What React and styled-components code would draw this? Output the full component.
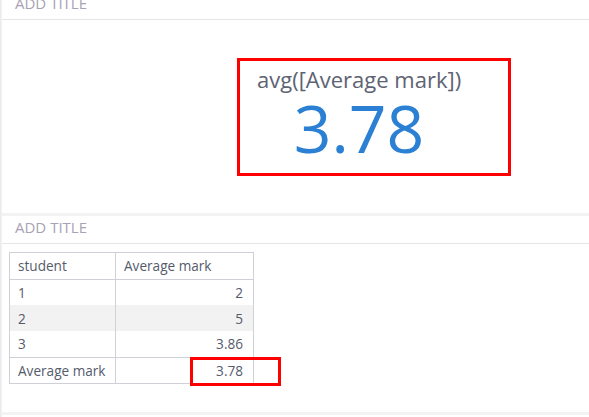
import React from "react";
import styled, { createGlobalStyle } from "styled-components";

const GlobalStyle = createGlobalStyle`
  html, body {
    margin: 0;
    padding: 0;
    background: #ffffff;
    font-family: "Open Sans", "Liberation Sans", sans-serif;
    overflow: hidden;
  }
`;

const Page = styled.div`
  width: 589px;
  height: 425px;
  overflow: hidden;
  margin-top: -8px;
  padding-left: 2px;
  box-sizing: border-box;
  background: linear-gradient(to right, #e9e9e9, #f3f3f3 2px);
  display: flex;
  flex-direction: column;
  gap: 3px;
`;

const Panel = styled.section`
  background: #ffffff;
  display: flex;
  flex-direction: column;
`;

const PanelHeader = styled.div`
  height: 28px;
  box-sizing: border-box;
  padding: 0 0 5px 13px;
  border-bottom: 1px solid #e6e6e6;
  display: flex;
  align-items: center;
`;

const Title = styled.span`
  font-size: 15px;
  color: #a9a2b4;
`;

const KpiBody = styled.div`
  height: 193px;
  box-sizing: border-box;
  padding: 0 0 0 235px;
  display: flex;
  align-items: center;
`;

const Highlight = styled.div`
  width: 274px;
  height: 118px;
  box-sizing: border-box;
  border: 3px solid #ff0000;
  padding-left: 17px;
  display: flex;
`;

const Kpi = styled.div`
  display: flex;
  flex-direction: column;
  align-items: center;
`;

const KpiLabel = styled.div`
  font-size: 22px;
  line-height: 28px;
  color: #5d6373;
  margin-top: 4px;
`;

const KpiValue = styled.div`
  font-size: 66px;
  line-height: 62px;
  color: #2b80d4;
  margin-top: 3px;
`;

const TableBody = styled.div`
  height: 160px;
  padding: 8px 0 0 7px;
  position: relative;
`;

const TableFrame = styled.div`
  display: inline-block;
  border-top: 1px solid #cfd0d8;
  border-bottom: 1px solid #cfd0d8;
`;

const Table = styled.table`
  border-collapse: collapse;
  font-size: 13.6px;
  color: #555b6b;
`;

const Row = styled.tr`
  height: 26px;
  background: ${(p) => (p.$striped ? "#f2f2f2" : "#ffffff")};
  border-top: ${(p) => (p.$ruled ? "1px solid #cfd0d8" : "none")};
`;

const Cell = styled.td`
  box-sizing: border-box;
  padding: 0 ${(p) => (p.$num ? "10px" : "8px")} 0 8px;
  text-align: ${(p) => (p.$num ? "right" : "left")};
  border-left: 1px solid #cfd0d8;
  border-right: 1px solid #cfd0d8;
  width: ${(p) => p.$w || "auto"};
  white-space: nowrap;
`;

const CellMark = styled.div`
  position: absolute;
  left: 188px;
  top: 113px;
  width: 91px;
  height: 29px;
  box-sizing: border-box;
  border: 3px solid #ff0000;
`;

const rows = [
  { student: "1", mark: "2" },
  { student: "2", mark: "5" },
  { student: "3", mark: "3.86" },
];

export default function App() {
  return (
    <>
      <GlobalStyle />
      <Page>
        <Panel>
          <PanelHeader>
            <Title>ADD TITLE</Title>
          </PanelHeader>
          <KpiBody>
            <Highlight>
              <Kpi>
                <KpiLabel>avg([Average mark])</KpiLabel>
                <KpiValue>3.78</KpiValue>
              </Kpi>
            </Highlight>
          </KpiBody>
        </Panel>
        <Panel>
          <PanelHeader>
            <Title>ADD TITLE</Title>
          </PanelHeader>
          <TableBody>
            <TableFrame>
              <Table>
                <tbody>
                  <Row>
                    <Cell $w="106px">student</Cell>
                    <Cell $w="138px">Average mark</Cell>
                  </Row>
                  {rows.map((r, i) => (
                    <Row key={r.student} $striped={i === 1} $ruled={i === 0}>
                      <Cell>{r.student}</Cell>
                      <Cell $num>{r.mark}</Cell>
                    </Row>
                  ))}
                  <Row $ruled>
                    <Cell>Average mark</Cell>
                    <Cell $num>3.78</Cell>
                  </Row>
                </tbody>
              </Table>
            </TableFrame>
            <CellMark />
          </TableBody>
        </Panel>
        <Panel>
          <PanelHeader>
            <Title>ADD TITLE</Title>
          </PanelHeader>
        </Panel>
      </Page>
    </>
  );
}
